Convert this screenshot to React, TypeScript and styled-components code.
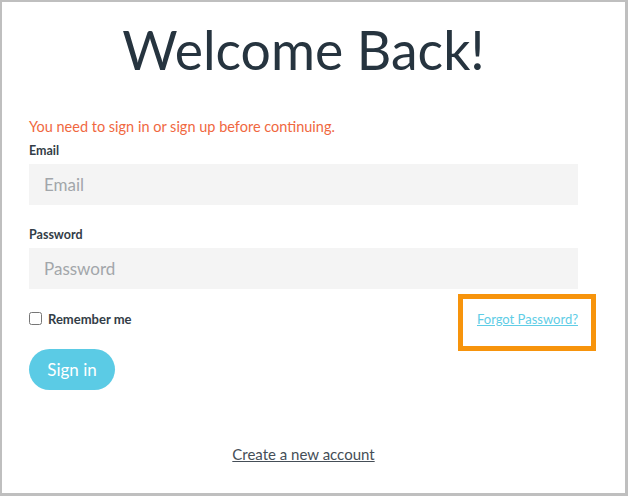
import styled, { createGlobalStyle } from "styled-components";

const GlobalStyle = createGlobalStyle`
  html, body {
    margin: 0;
    padding: 0;
    background: #ffffff;
  }
  body {
    font-family: Lato, "Open Sans", "Liberation Sans", sans-serif;
  }
`;

const Frame = styled.div`
  box-sizing: border-box;
  width: 628px;
  height: 496px;
  border: 2px solid #bfbfbf;
  border-right-width: 3px;
  border-bottom-width: 3px;
  padding: 14.5px 0 0 27px;
  overflow: hidden;
`;

const Content = styled.div`
  width: 549px;
  display: flex;
  flex-direction: column;
`;

const Title = styled.h1`
  margin: 0;
  font-size: 53.5px;
  line-height: 64px;
  font-weight: 400;
  color: #26343f;
  text-align: center;
`;

const Alert = styled.p`
  margin: 37.5px 0 0;
  font-size: 14.5px;
  line-height: 18px;
  color: #f0683f;
`;

const Form = styled.form`
  display: flex;
  flex-direction: column;
`;

const Label = styled.label<{ $first?: boolean }>`
  margin-top: ${(p) => (p.$first ? "8px" : "23px")};
  font-size: 12.5px;
  line-height: 14px;
  font-weight: 700;
  color: #333d47;
`;

const Input = styled.input`
  box-sizing: border-box;
  margin-top: 6px;
  width: 100%;
  height: 41px;
  padding: 0 15px;
  border: none;
  outline: none;
  background: #f4f4f4;
  font-family: inherit;
  font-size: 17px;
  color: #333d47;
  &::placeholder {
    color: #a2a6aa;
  }
`;

const OptionsRow = styled.div`
  margin-top: 21.5px;
  display: flex;
  align-items: center;
  justify-content: space-between;
  height: 16px;
`;

const Remember = styled.label`
  display: flex;
  align-items: center;
  gap: 6px;
  font-size: 13px;
  line-height: 16px;
  font-weight: 700;
  color: #333d47;
`;

const Checkbox = styled.input`
  margin: 0;
  width: 13px;
  height: 13px;
`;

const ForgotWrap = styled.span`
  position: relative;
  display: inline-block;
  line-height: 16px;
`;

const ForgotLink = styled.a`
  font-size: 13px;
  color: #5fcde6;
  text-decoration: underline;
`;

const Highlight = styled.span`
  position: absolute;
  top: -16px;
  left: -19px;
  right: -18px;
  bottom: -24px;
  border: 5px solid #f7940c;
  pointer-events: none;
`;

const SignInButton = styled.button`
  align-self: flex-start;
  margin-top: 22.5px;
  width: 86px;
  height: 41px;
  padding: 0;
  border: none;
  border-radius: 21px;
  background: #5bcbe5;
  color: #ffffff;
  font-family: inherit;
  font-size: 17px;
  cursor: pointer;
`;

const Footer = styled.div`
  margin-top: 54.5px;
  text-align: center;
  font-size: 15px;
  line-height: 18px;
`;

const FooterLink = styled.a`
  color: #454e57;
  text-decoration: underline;
`;

export default function App() {
  return (
    <>
      <GlobalStyle />
      <Frame>
        <Content>
          <Title>Welcome Back!</Title>
          <Alert>You need to sign in or sign up before continuing.</Alert>
          <Form onSubmit={(e) => e.preventDefault()}>
            <Label $first htmlFor="email">
              Email
            </Label>
            <Input id="email" type="email" placeholder="Email" />
            <Label htmlFor="password">Password</Label>
            <Input id="password" type="password" placeholder="Password" />
            <OptionsRow>
              <Remember>
                <Checkbox type="checkbox" />
                Remember me
              </Remember>
              <ForgotWrap>
                <ForgotLink href="#">Forgot Password?</ForgotLink>
                <Highlight />
              </ForgotWrap>
            </OptionsRow>
            <SignInButton type="submit">Sign in</SignInButton>
          </Form>
          <Footer>
            <FooterLink href="#">Create a new account</FooterLink>
          </Footer>
        </Content>
      </Frame>
    </>
  );
}
